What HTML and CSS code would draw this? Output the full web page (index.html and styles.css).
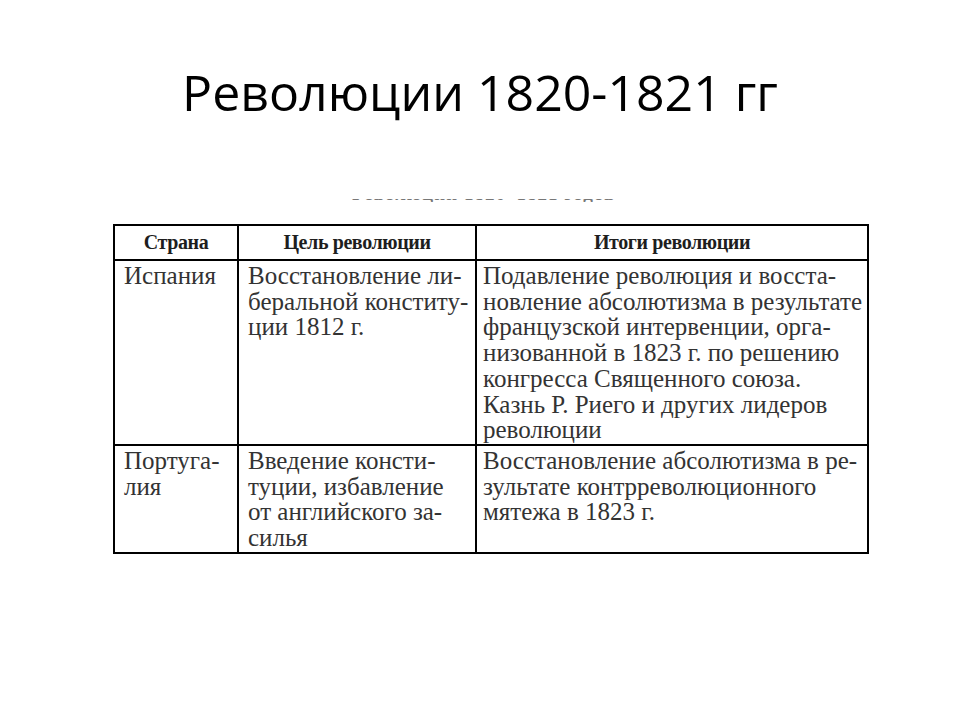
FILE: index.html
```html
<!DOCTYPE html>
<html lang="ru">
<head>
<meta charset="utf-8">
<title>Революции 1820-1821 гг</title>
<link rel="stylesheet" href="styles.css">
</head>
<body>
<div class="slide">
  <h1 class="title">Революции 1820-1821 гг</h1>
  <div class="caption-clip"><span class="caption">Революции 1820–1821 годов</span></div>
  <table class="rev">
    <colgroup>
      <col class="c1"><col class="c2"><col class="c3">
    </colgroup>
    <thead>
      <tr class="head"><th>Страна</th><th>Цель революции</th><th>Итоги революции</th></tr>
    </thead>
    <tbody>
      <tr class="r1">
        <td>Испания</td>
        <td>Восстановление ли-<br>беральной конститу-<br>ции 1812 г.</td>
        <td>Подавление революция и восста-<br>новление абсолютизма в результате<br>французской интервенции, орга-<br>низованной в 1823 г. по решению<br>конгресса Священного союза.<br>Казнь Р. Риего и других лидеров<br>революции</td>
      </tr>
      <tr class="r2">
        <td>Португа-<br>лия</td>
        <td>Введение консти-<br>туции, избавление<br>от английского за-<br>силья</td>
        <td>Восстановление абсолютизма в ре-<br>зультате контрреволюционного<br>мятежа в 1823 г.</td>
      </tr>
    </tbody>
  </table>
</div>
</body>
</html>
```
FILE: styles.css
```css
html, body {
  margin: 0;
  padding: 0;
  background: #fff;
}
.slide {
  width: 960px;
  height: 720px;
  display: flex;
  flex-direction: column;
  align-items: center;
}
.title {
  margin: 62px 0 0 0;
  font-family: "Open Sans", "Liberation Sans", sans-serif;
  font-weight: 400;
  font-size: 50px;
  line-height: 60px;
  letter-spacing: 0;
  color: #000;
}
.caption-clip {
  margin-top: 77px;
  height: 3px;
  overflow: hidden;
  align-self: flex-start;
  margin-left: 352px;
}
.caption {
  display: block;
  margin-top: -14px;
  font-family: "Liberation Serif", serif;
  font-weight: 700;
  font-size: 19px;
  line-height: 18px;
  color: #777;
  letter-spacing: 1px;
}
.rev {
  margin-top: 22px;
  margin-left: 113px;
  align-self: flex-start;
  border-collapse: collapse;
  font-family: "Liberation Serif", "DejaVu Serif", serif;
  color: #333;
  table-layout: fixed;
  width: 754px;
}
.c1 { width: 124px; }
.c2 { width: 238px; }
.c3 { width: 392px; }
.rev th, .rev td {
  border: 2px solid #000;
  vertical-align: top;
  text-align: left;
  white-space: nowrap;
}
.rev th {
  text-align: center;
  vertical-align: middle;
  font-weight: 700;
  font-size: 20px;
  letter-spacing: -0.4px;
  height: 33px;
  padding: 0;
  color: #1e1e1e;
}
.rev td {
  font-size: 25px;
  line-height: 25.7px;
  padding: 2px 2px 0 9px;
}
.rev td:last-child { padding-left: 6px; }
.r1 td { height: 181px; }
.r2 td { height: 104px; }
```
